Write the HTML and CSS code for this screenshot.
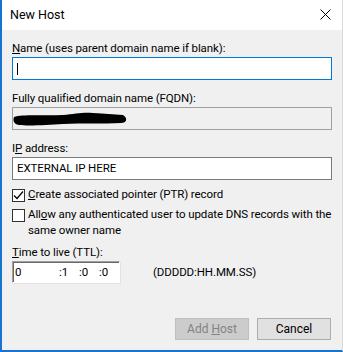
FILE: index.html
```html
<!DOCTYPE html>
<html lang="en">
<head>
    <meta charset="UTF-8">
    <title>New Host</title>
    <link rel="stylesheet" href="styles.css">
</head>
<body>
    <div class="window">
        <div class="titlebar">
            <span class="title">New Host</span>
            <button class="close-btn" aria-label="Close">
                <svg width="11" height="11" viewBox="0 0 11 11" fill="none" stroke="#000" stroke-width="1">
                    <path d="M0.5 0.5 L10.5 10.5 M10.5 0.5 L0.5 10.5"></path>
                </svg>
            </button>
        </div>

        <div class="content">
            <label class="field-label"><u>N</u>ame (uses parent domain name if blank):</label>
            <div class="textbox focused"><span class="caret"></span></div>

            <label class="field-label gap">Fully qualified domain name (FQDN):</label>
            <div class="textbox disabled">
                <svg class="scribble" width="116" height="18" viewBox="0 0 116 18">
                    <path d="M1 7 C10 4 30 6 50 5 C62 4 70 2 80 3 C92 4 100 4 110 5 C115 8 114 13 108 13 C90 14 70 13 50 14 C35 15 15 16 6 15 C0 14 0 10 1 7 Z" fill="#000"></path>
                </svg>
            </div>

            <label class="field-label gap">I<u>P</u> address:</label>
            <div class="textbox">EXTERNAL IP HERE</div>

            <div class="check-row first">
                <span class="checkbox">
                    <svg width="11" height="11" viewBox="0 0 11 11" fill="none" stroke="#000" stroke-width="1.2">
                        <path d="M1 5.5 L4 8.5 L10 1.5"></path>
                    </svg>
                </span>
                <span class="check-text"><u>C</u>reate associated pointer (PTR) record</span>
            </div>
            <div class="check-row">
                <span class="checkbox"></span>
                <span class="check-text">All<u>o</u>w any authenticated user to update DNS records with the<br>same owner name</span>
            </div>

            <label class="field-label ttl-label"><u>T</u>ime to live (TTL):</label>
            <div class="ttl-row">
                <div class="ttl-box">
                    <span class="ttl-days">0</span>
                    <span class="ttl-part">:1</span>
                    <span class="ttl-part">:0</span>
                    <span class="ttl-part">:0</span>
                </div>
                <span class="ttl-hint">(DDDDD:HH.MM.SS)</span>
            </div>

            <div class="buttons">
                <button class="btn" disabled>Add <u>H</u>ost</button>
                <button class="btn">Cancel</button>
            </div>
        </div>
    </div>
</body>
</html>
```

FILE: styles.css
```css
* {
    margin: 0;
    padding: 0;
    box-sizing: border-box;
}

body {
    font-family: Roboto, "Noto Sans", "Liberation Sans", sans-serif;
    font-size: 11.5px;
    letter-spacing: -0.1px;
    color: #000;
    background: #f0f0f0;
}

.window {
    width: 343px;
    height: 352px;
    border-left: 2px solid #1773d1;
    border-bottom: 2px solid #1773d1;
    border-right: 1px solid #d9d9d9;
    background: #f0f0f0;
    display: flex;
    flex-direction: column;
}

.titlebar {
    height: 30px;
    background: #fff;
    display: flex;
    align-items: center;
    justify-content: space-between;
    padding: 0 11px 2px 8px;
}

.title {
    font-size: 12.5px;
    letter-spacing: 0;
}

.close-btn {
    background: none;
    border: none;
    display: flex;
}

.content {
    padding: 10px 10px 0 10px;
    display: flex;
    flex-direction: column;
    flex: 1;
}

.field-label {
    display: block;
    line-height: 16px;
    height: 16px;
    margin-bottom: 1px;
}

.field-label.gap {
    margin-top: 10px;
}

.textbox {
    height: 23px;
    width: 320px;
    border: 1px solid #7a7a7a;
    background: #fff;
    padding: 0 4px;
    line-height: 21px;
    display: flex;
    align-items: center;
}

.textbox.focused {
    border-color: #0078d7;
}

.caret {
    width: 1px;
    height: 12px;
    background: #000;
}

.textbox.disabled {
    background: #f0f0f0;
    border-color: #a0a0a0;
    padding: 0;
}

.check-row {
    display: flex;
    align-items: flex-start;
    gap: 3px;
    margin-top: 4px;
    line-height: 16px;
}

.check-row.first {
    margin-top: 6px;
}

.checkbox {
    width: 13px;
    height: 13px;
    margin-top: 3px;
    border: 1px solid #333;
    background: #fff;
    flex: none;
    display: flex;
    align-items: center;
    justify-content: center;
}

.check-text {
    white-space: nowrap;
}

.field-label.ttl-label {
    margin-top: 6px;
}

.ttl-row {
    display: flex;
    align-items: center;
}

.ttl-box {
    width: 108px;
    height: 22px;
    background: #fff;
    border-top: 1px solid #a0a0a0;
    border-left: 1px solid #a0a0a0;
    border-right: 1px solid #fff;
    border-bottom: 1px solid #fff;
    box-shadow: inset 1px 1px 0 #696969, 1px 1px 0 #e3e3e3;
    display: flex;
    align-items: center;
    padding-left: 2px;
}

.ttl-days {
    width: 44px;
}

.ttl-part {
    width: 20px;
}

.ttl-hint {
    margin-left: 33px;
}

.buttons {
    margin-top: auto;
    margin-bottom: 10px;
    display: flex;
    justify-content: flex-end;
    gap: 8px;
    padding-right: 1px;
}

.btn {
    width: 74px;
    height: 22px;
    font-family: inherit;
    font-size: 12px;
    letter-spacing: 0;
    background: #e1e1e1;
    border: 1px solid #adadad;
    color: #000;
}

.btn:disabled {
    background: #cccccc;
    border-color: #bfbfbf;
    color: #838383;
}
```
